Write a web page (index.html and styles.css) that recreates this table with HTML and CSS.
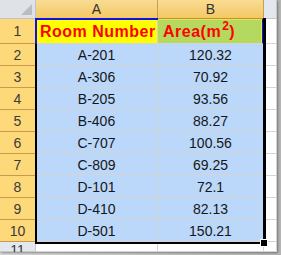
FILE: index.html
```html
<!DOCTYPE html>
<html>
<head>
<meta charset="utf-8">
<link rel="stylesheet" href="styles.css">
</head>
<body>
<div class="sheet">
  <div class="corner"><span class="tri"></span></div>
  <div class="colhead sel">A</div>
  <div class="colhead sel">B</div>
  <div class="colhead"></div>

  <div class="rowhead sel">1</div>
  <div class="cell title a1">Room Number</div>
  <div class="cell title b1">Area(m<span class="sup">2</span>)</div>
  <div class="cell blank"></div>

  <div class="rowhead sel">2</div><div class="cell data">A-201</div><div class="cell data">120.32</div><div class="cell blank"></div>
  <div class="rowhead sel">3</div><div class="cell data">A-306</div><div class="cell data">70.92</div><div class="cell blank"></div>
  <div class="rowhead sel">4</div><div class="cell data">B-205</div><div class="cell data">93.56</div><div class="cell blank"></div>
  <div class="rowhead sel">5</div><div class="cell data">B-406</div><div class="cell data">88.27</div><div class="cell blank"></div>
  <div class="rowhead sel">6</div><div class="cell data">C-707</div><div class="cell data">100.56</div><div class="cell blank"></div>
  <div class="rowhead sel">7</div><div class="cell data">C-809</div><div class="cell data">69.25</div><div class="cell blank"></div>
  <div class="rowhead sel">8</div><div class="cell data">D-101</div><div class="cell data">72.1</div><div class="cell blank"></div>
  <div class="rowhead sel">9</div><div class="cell data">D-410</div><div class="cell data">82.13</div><div class="cell blank"></div>
  <div class="rowhead sel">10</div><div class="cell data">D-501</div><div class="cell data">150.21</div><div class="cell blank"></div>

  <div class="rowhead last">11</div><div class="cell blank"></div><div class="cell blank"></div><div class="cell blank"></div>

  <div class="sel-frame"></div>
  <div class="sel-active"></div>
  <div class="handle"></div>
</div>
</body>
</html>
```

FILE: styles.css
```css
html, body {
  margin: 0;
  padding: 0;
}
body {
  width: 281px;
  height: 255px;
  background: linear-gradient(90deg, #d8d8d8 0, #b4b4b4 100%);
  overflow: hidden;
  font-family: "Liberation Sans", Arial, sans-serif;
}
.sheet {
  position: relative;
  width: 277px;
  height: 252px;
  background: #fff;
  display: grid;
  grid-template-columns: 36px 122px 106px 13px;
  grid-template-rows: 19px 25px repeat(9, 22px) 10px;
  overflow: hidden;
  box-shadow: 1px 1px 2px rgba(0,0,0,0.35);
}
.corner {
  position: relative;
  background: #dfe3e8;
  border-right: 1px solid #c0c4ca;
  border-bottom: 1px solid #c0c4ca;
  box-sizing: border-box;
}
.tri {
  position: absolute;
  right: 3px;
  bottom: 3px;
  width: 0;
  height: 0;
  border-left: 11px solid transparent;
  border-bottom: 11px solid #b9bec6;
}
.colhead {
  box-sizing: border-box;
  background: #e4e8ee;
  border-right: 1px solid #c5c9cf;
  border-bottom: 1px solid #c5c9cf;
  color: #333;
  font-size: 14px;
  display: flex;
  align-items: center;
  justify-content: center;
}
.colhead.sel {
  background: linear-gradient(#f9dc93, #f4c865);
  border-right: 1px solid #c9a04e;
  border-bottom: 1px solid #c28f3a;
}
.rowhead {
  box-sizing: border-box;
  background: #e4e8ee;
  border-right: 1px solid #c5c9cf;
  border-bottom: 1px solid #c5c9cf;
  color: #3a3a3a;
  font-size: 14px;
  display: flex;
  align-items: center;
  justify-content: center;
}
.rowhead.last {
  align-items: flex-start;
  line-height: 14px;
  padding-top: 1px;
}
.rowhead.sel {
  background: #fdd97a;
  border-right: 1px solid #a9792e;
  border-bottom: 1px solid #c99a4c;
}
.cell {
  box-sizing: border-box;
  border-right: 1px solid #d4d4d4;
  border-bottom: 1px solid #d4d4d4;
  display: flex;
  align-items: center;
  justify-content: center;
  white-space: nowrap;
  overflow: hidden;
}
.blank {
  background: #fff;
}
.data {
  background: #bbd8fb;
  color: #161616;
  font-size: 14px;
  padding-top: 1px;
}
.title {
  color: #ff0000;
  font-weight: bold;
  font-size: 16px;
  letter-spacing: 0.5px;
  justify-content: flex-start;
  padding-left: 4px;
  padding-top: 2px;
}
.sup {
  display: inline-block;
  font-size: 12px;
  line-height: 12px;
  position: relative;
  top: -6px;
  margin-left: 1px;
}
.a1 {
  background: #ffff00;
}
.b1 {
  background: #b5d85e;
  box-shadow: inset 0 1px 0 #e6e94a, inset -1px 0 0 #e6e94a;
  padding-left: 5px;
  border-right: 2px solid #1010e8;
  overflow: visible;
}
.sel-frame {
  position: absolute;
  left: 35px;
  top: 18px;
  width: 231px;
  height: 226px;
  box-sizing: border-box;
  border-left: 2px solid #000;
  border-right: 3px solid #000;
  border-bottom: 2px solid #000;
  pointer-events: none;
}
.sel-active {
  position: absolute;
  left: 35px;
  top: 18px;
  width: 123px;
  height: 26px;
  box-sizing: border-box;
  border-left: 2px solid #1010e8;
  border-top: 2px solid #1010e8;
  pointer-events: none;
}
.handle {
  position: absolute;
  left: 261px;
  top: 240px;
  width: 6px;
  height: 6px;
  background: #000;
  box-shadow: 0 0 0 1px #fff;
}
```
